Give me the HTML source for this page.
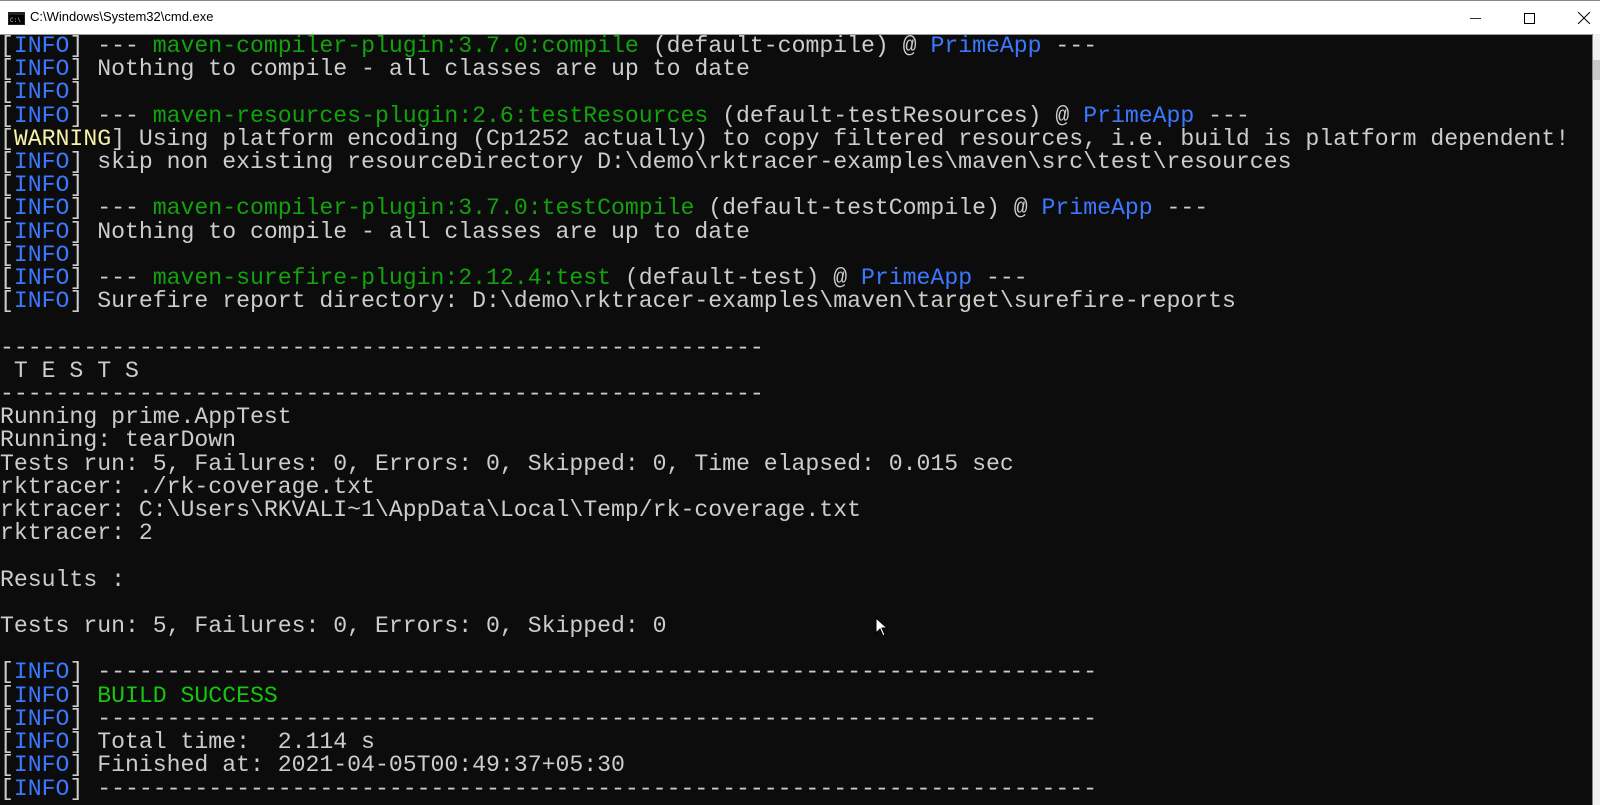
<!DOCTYPE html>
<html><head><meta charset="utf-8"><style>
html,body{margin:0;padding:0;width:1600px;height:805px;overflow:hidden;background:#fff}
#title{position:absolute;left:0;top:0;width:1600px;height:34px;background:#fff;border-top:1px solid #888;box-sizing:border-box}
#title .t{position:absolute;left:30px;top:8px;font:13px "Liberation Sans",sans-serif;color:#000}
#term{position:absolute;left:0;top:34px;width:1592px;height:771px;background:#0c0c0c;border-top:1px solid #999;box-sizing:border-box}
#sb{position:absolute;left:1592px;top:34px;width:8px;height:771px;background:#f0f0f0;border-left:1px solid #888;box-sizing:border-box}
pre{position:absolute;left:0;top:0;margin:0;font-family:"Liberation Mono",monospace;font-size:23.15px;line-height:23.2px;color:#cccccc;letter-spacing:0}
.b{color:#3b78ff}.g{color:#13a10e}.y{color:#f9f1a5}.s{color:#16c60c}
</style></head><body>
<div id="title">
<svg style="position:absolute;left:8px;top:11px" width="17" height="13"><rect x="0" y="0" width="17" height="13" fill="#222"/><rect x="1" y="3" width="15" height="9" fill="#000"/><text x="2" y="10" font-size="6" fill="#ccc" font-family="Liberation Mono">C:\</text></svg>
<span class="t">C:\Windows\System32\cmd.exe</span>
<div style="position:absolute;left:1470px;top:17px;width:11px;height:1px;background:#333"></div>
<div style="position:absolute;left:1524px;top:12px;width:9px;height:9px;border:1px solid #000"></div>
<svg style="position:absolute;left:1578px;top:11px" width="12" height="12"><path d="M0 0L12 12M12 0L0 12" stroke="#000" stroke-width="1"/></svg>
</div>
<div id="term"><pre>
<span>[</span><span class="b">INFO</span>] --- <span class="g">maven-compiler-plugin:3.7.0:compile</span> (default-compile) @ <span class="b">PrimeApp</span> ---
[<span class="b">INFO</span>] Nothing to compile - all classes are up to date
[<span class="b">INFO</span>]
[<span class="b">INFO</span>] --- <span class="g">maven-resources-plugin:2.6:testResources</span> (default-testResources) @ <span class="b">PrimeApp</span> ---
[<span class="y">WARNING</span>] Using platform encoding (Cp1252 actually) to copy filtered resources, i.e. build is platform dependent!
[<span class="b">INFO</span>] skip non existing resourceDirectory D:\demo\rktracer-examples\maven\src\test\resources
[<span class="b">INFO</span>]
[<span class="b">INFO</span>] --- <span class="g">maven-compiler-plugin:3.7.0:testCompile</span> (default-testCompile) @ <span class="b">PrimeApp</span> ---
[<span class="b">INFO</span>] Nothing to compile - all classes are up to date
[<span class="b">INFO</span>]
[<span class="b">INFO</span>] --- <span class="g">maven-surefire-plugin:2.12.4:test</span> (default-test) @ <span class="b">PrimeApp</span> ---
[<span class="b">INFO</span>] Surefire report directory: D:\demo\rktracer-examples\maven\target\surefire-reports

-------------------------------------------------------
 T E S T S
-------------------------------------------------------
Running prime.AppTest
Running: tearDown
Tests run: 5, Failures: 0, Errors: 0, Skipped: 0, Time elapsed: 0.015 sec
rktracer: ./rk-coverage.txt
rktracer: C:\Users\RKVALI~1\AppData\Local\Temp/rk-coverage.txt
rktracer: 2

Results :

Tests run: 5, Failures: 0, Errors: 0, Skipped: 0

[<span class="b">INFO</span>] ------------------------------------------------------------------------
[<span class="b">INFO</span>] <span class="s">BUILD SUCCESS</span>
[<span class="b">INFO</span>] ------------------------------------------------------------------------
[<span class="b">INFO</span>] Total time:  2.114 s
[<span class="b">INFO</span>] Finished at: 2021-04-05T00:49:37+05:30
[<span class="b">INFO</span>] ------------------------------------------------------------------------</pre>
<svg style="position:absolute;left:875px;top:582px" width="14" height="21"><path d="M1 1L1 16L5 12L8 19L10 18L7 11L12 11Z" fill="#fff" stroke="#000" stroke-width="1"/></svg>
</div>
<div id="sb"><div style="position:absolute;left:0;top:26px;width:8px;height:20px;background:#c8c8c8"></div></div>
</body></html>
